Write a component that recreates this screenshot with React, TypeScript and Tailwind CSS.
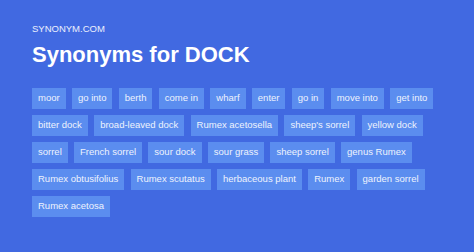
import React from 'react';

const synonyms = [
  'moor', 'go into', 'berth', 'come in', 'wharf', 'enter', 'go in', 'move into', 'get into',
  'bitter dock', 'broad-leaved dock', 'Rumex acetosella', "sheep's sorrel", 'yellow dock',
  'sorrel', 'French sorrel', 'sour dock', 'sour grass', 'sheep sorrel', 'genus Rumex',
  'Rumex obtusifolius', 'Rumex scutatus', 'herbaceous plant', 'Rumex', 'garden sorrel',
  'Rumex acetosa',
];

export default function App() {
  return (
    <div className="w-[474px] h-[252px] bg-[#4169e1] px-8 pt-[23px] font-['Liberation_Sans',Arial,sans-serif] overflow-hidden">
      <div className="text-[9.5px] leading-[12px] text-white/90">SYNONYM.COM</div>
      <h1 className="mt-[7px] text-[22px] leading-[26px] font-bold text-white">Synonyms for DOCK</h1>

      {/* Chips */}
      <div className="mt-[20px] flex flex-wrap gap-x-[6.3px] gap-y-[6px]">
        {synonyms.map(word => (
          <span
            key={word}
            className="h-[21px] flex items-center px-[6px] bg-[#5b8def] text-[9.5px] text-[#eef3fd] whitespace-nowrap"
          >
            {word}
          </span>
        ))}
      </div>
    </div>
  );
}
